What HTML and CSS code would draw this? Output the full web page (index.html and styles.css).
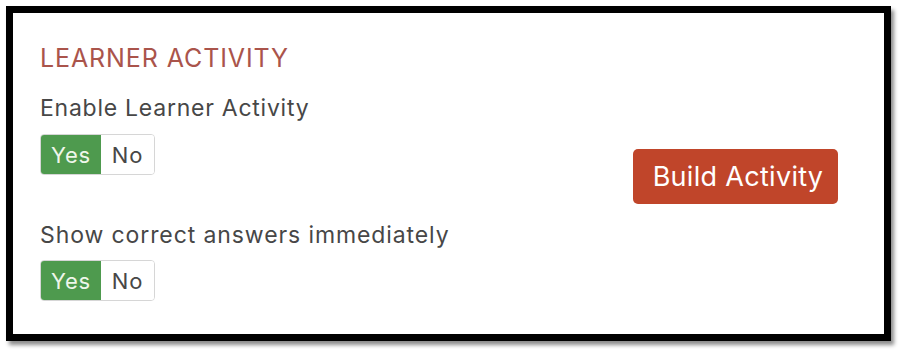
FILE: index.html
```html
<!DOCTYPE html>
<html>
<head>
<meta charset="utf-8">
<link rel="stylesheet" href="styles.css">
</head>
<body>
<div class="frame">
  <div class="settings">
    <h2 class="title">LEARNER ACTIVITY</h2>
    <div class="field">
      <div class="label">Enable Learner Activity</div>
      <div class="toggle"><span class="opt on">Yes</span><span class="opt off">No</span></div>
    </div>
    <div class="field second">
      <div class="label">Show correct answers immediately</div>
      <div class="toggle"><span class="opt on">Yes</span><span class="opt off">No</span></div>
    </div>
  </div>
  <button class="build">Build Activity</button>
</div>
</body>
</html>
```

FILE: styles.css
```css
html, body {
  margin: 0;
  padding: 0;
  background: #ffffff;
}
body {
  width: 900px;
  height: 354px;
  font-family: Inter, "Open Sans", sans-serif;
  color: #474747;
}
.frame {
  box-sizing: border-box;
  margin: 6px 0 0 6px;
  width: 885px;
  height: 335px;
  border: 7px solid #000;
  box-shadow: 3px 4px 4px rgba(0,0,0,0.45);
  display: flex;
  align-items: center;
  justify-content: space-between;
  padding: 0 46px 0 27px;
}
.settings {
  align-self: flex-start;
  padding-top: 30px;
}
.title {
  margin: 0;
  font-weight: 400;
  font-size: 25px;
  line-height: 30px;
  letter-spacing: 0.9px;
  color: #aa544b;
}
.field {
  margin-top: 21px;
}
.field.second {
  margin-top: 46px;
}
.label {
  font-size: 23px;
  line-height: 28px;
  letter-spacing: 0.9px;
}
.field:first-of-type .label {
  letter-spacing: 0.75px;
}
.toggle {
  display: inline-flex;
  margin-top: 12px;
  height: 41px;
  border-radius: 4px;
  overflow: hidden;
  border: 1px solid #d6d6d6;
  box-sizing: border-box;
}
.field.second .toggle {
  margin-top: 11px;
}
.opt {
  display: flex;
  align-items: center;
  justify-content: center;
  font-size: 22px;
  letter-spacing: 0.8px;
}
.opt.on {
  width: 60px;
  background: #4e9a4e;
  color: #eef6ea;
}
.opt.off {
  width: 53px;
  background: #fff;
  color: #474747;
}
.build {
  margin-top: 5px;
  width: 205px;
  height: 55px;
  border: none;
  border-radius: 5px;
  background: #c0452a;
  color: #fff;
  font-family: Inter, "Open Sans", sans-serif;
  font-size: 27px;
  letter-spacing: 0.3px;
  padding: 0 0 0 5px;
}
```
